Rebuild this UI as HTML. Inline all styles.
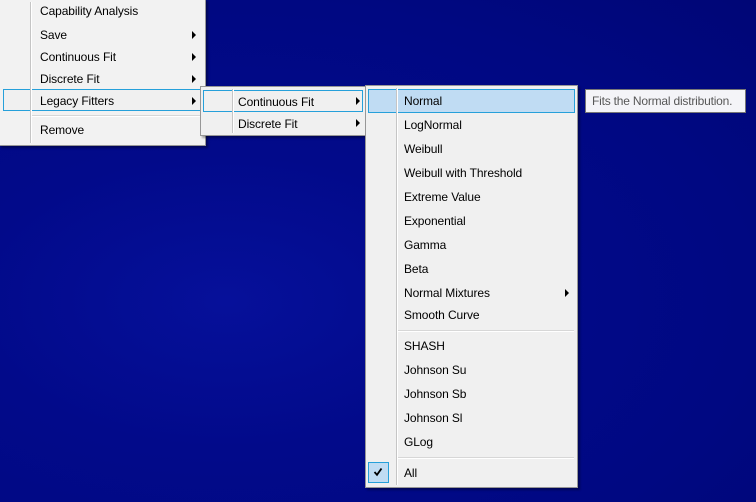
<!DOCTYPE html>
<html><head><style>
html,body{margin:0;padding:0;width:756px;height:502px;overflow:hidden}
body{background:radial-gradient(ellipse at 30% 60%,#06109a 0%,#020a8a 35%,#000882 70%,#000676 100%);font-family:"Liberation Sans",sans-serif;font-size:12px;color:#000;position:relative}
.m{position:absolute;background:#f0f0f0;border:1px solid #979797;box-shadow:2px 2px 2px rgba(0,0,0,.35)}
.g{position:absolute;top:2px;bottom:2px;width:1px;background:#c5c5c5;border-right:1px solid #fff}
.t{position:absolute;white-space:nowrap;line-height:14px;letter-spacing:-0.1px}
.a{position:absolute;width:0;height:0;border-top:4px solid transparent;border-bottom:4px solid transparent;border-left:4px solid #000}
.h{position:absolute;background:#f0f0f0;border:1px solid #26a0da}
.hs{position:absolute;background:#c0dcf3;border:1px solid #26a0da}
.s{position:absolute;height:1px;background:#d7d7d7;border-bottom:1px solid #fff}
</style></head><body>
<div class="m" style="left:-1px;top:-1px;width:205px;height:145px;background:#f2f2f2">
 <div class="h" style="left:3px;top:89px;width:199px;height:20px"></div>
 <div class="g" style="left:30px"></div>
 <div class="t" style="left:40px;top:4px">Capability Analysis</div>
 <div class="t" style="left:40px;top:28px">Save</div><div class="a" style="left:192px;top:31px"></div>
 <div class="t" style="left:40px;top:50px">Continuous Fit</div><div class="a" style="left:192px;top:53px"></div>
 <div class="t" style="left:40px;top:72px">Discrete Fit</div><div class="a" style="left:192px;top:75px"></div>
 <div class="t" style="left:40px;top:94px">Legacy Fitters</div><div class="a" style="left:192px;top:97px"></div>
 <div class="s" style="left:32px;right:4px;top:115px"></div>
 <div class="t" style="left:40px;top:123px">Remove</div>
</div>
<div class="m" style="left:200px;top:86px;width:164px;height:48px">
 <div class="h" style="left:2px;top:3px;width:158px;height:20px"></div>
 <div class="g" style="left:31px"></div>
 <div class="t" style="left:37px;top:8px">Continuous Fit</div><div class="a" style="left:155px;top:10px"></div>
 <div class="t" style="left:37px;top:30px">Discrete Fit</div><div class="a" style="left:155px;top:32px"></div>
</div>
<div class="m" style="left:365px;top:85px;width:211px;height:401px">
 <div class="hs" style="left:2px;top:3px;width:205px;height:22px"></div>
 <div class="g" style="left:30px"></div>
 <div class="t" style="left:38px;top:8px">Normal</div>
 <div class="t" style="left:38px;top:32px">LogNormal</div>
 <div class="t" style="left:38px;top:56px">Weibull</div>
 <div class="t" style="left:38px;top:80px">Weibull with Threshold</div>
 <div class="t" style="left:38px;top:104px">Extreme Value</div>
 <div class="t" style="left:38px;top:128px">Exponential</div>
 <div class="t" style="left:38px;top:152px">Gamma</div>
 <div class="t" style="left:38px;top:176px">Beta</div>
 <div class="t" style="left:38px;top:200px">Normal Mixtures</div><div class="a" style="left:199px;top:203px"></div>
 <div class="t" style="left:38px;top:222px">Smooth Curve</div>
 <div class="s" style="left:32px;right:3px;top:244px"></div>
 <div class="t" style="left:38px;top:253px">SHASH</div>
 <div class="t" style="left:38px;top:277px">Johnson Su</div>
 <div class="t" style="left:38px;top:301px">Johnson Sb</div>
 <div class="t" style="left:38px;top:325px">Johnson Sl</div>
 <div class="t" style="left:38px;top:349px">GLog</div>
 <div class="s" style="left:32px;right:3px;top:371px"></div>
 <div class="hs" style="left:2px;top:376px;width:19px;height:19px"></div>
 <svg style="position:absolute;left:7px;top:381px" width="10" height="10" viewBox="0 0 10 10"><path d="M1.5 5 L4 7.8 L8.5 1.5" fill="none" stroke="#000" stroke-width="1.8"/></svg>
 <div class="t" style="left:38px;top:380px">All</div>
</div>
<div style="position:absolute;left:585px;top:89px;width:159px;height:22px;background:#f4f4f8;border:1px solid #767676;color:#575757;font-size:12px;line-height:22px;text-indent:6px;white-space:nowrap;letter-spacing:-0.2px">Fits the Normal distribution.</div>
</body></html>
